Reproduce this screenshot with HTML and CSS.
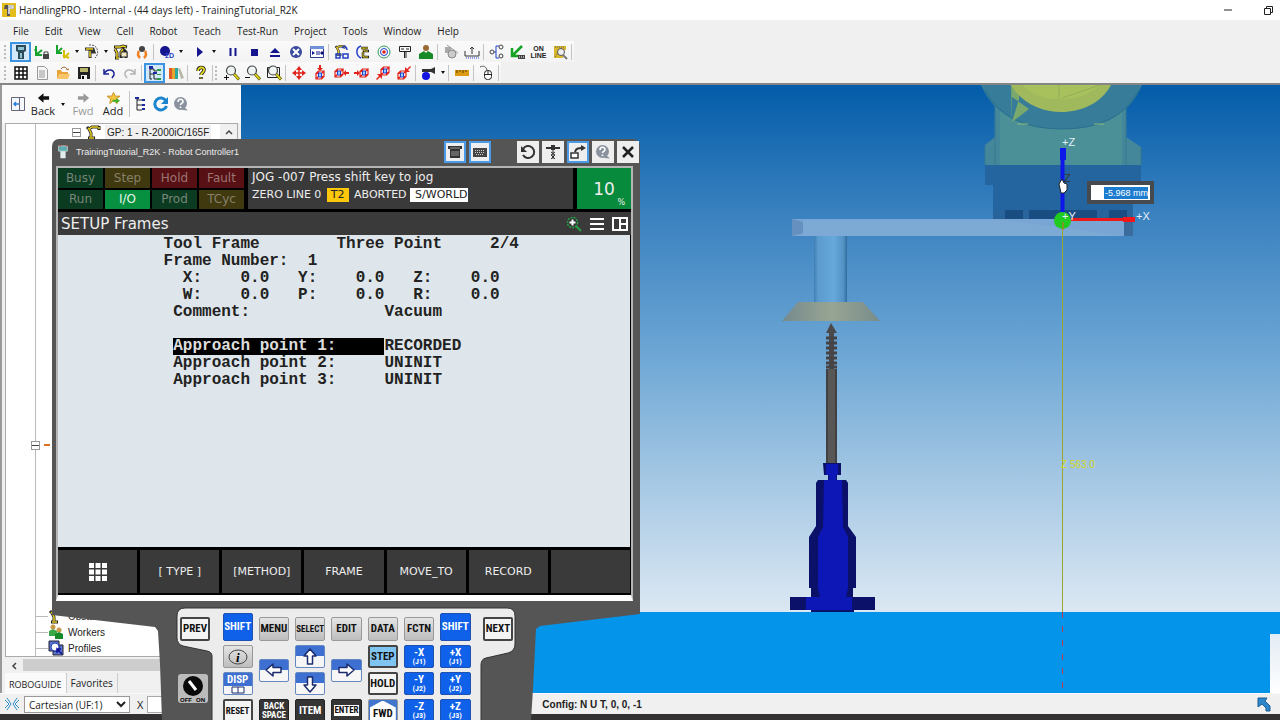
FILE: index.html
```html
<!DOCTYPE html>
<html lang="en">
<head>
  <meta charset="UTF-8">
  <meta name="viewport" content="width=device-width, initial-scale=1.0">
  <title>HandlingPRO</title>
  <link rel="stylesheet" href="styles.css">
</head>
<body>
  <!-- Shared icon parts -->
  <svg class="defs" aria-hidden="true">
    <symbol id="cube" viewBox="0 0 10 10">
      <path d="M1 3.500h5.500v5.500H1zM1 3.500L3.500 1H9L6.500 3.500M9 1v5.500L6.500 9M3.500 1v5.500H9M3.500 6.500L1 9" fill="none" stroke="#e2231a" stroke-width="1.200"/>
      <path d="M3.500 3h3v4h-3z" fill="#9ad0ff" stroke="#2340c8"/>
    </symbol>
    <symbol id="lens" viewBox="0 0 16 16">
      <path d="M10 9l5 5.500" stroke="#6b6400" stroke-width="3"/>
      <path d="M10 9l4.500 5" stroke="#e8dc20" stroke-width="1.500"/>
      <circle cx="7" cy="5.500" r="4.500" fill="#eef4f4" stroke="#444" stroke-width="1.200"/>
    </symbol>
    <symbol id="arrow" viewBox="0 0 20 18">
      <path d="M2 9l7-6v3.500h8v5H9V15z" fill="#fff" stroke="#1c2c6e" stroke-width="1.500" stroke-linejoin="round"/>
    </symbol>
    <symbol id="help" viewBox="0 0 16 16">
      <circle cx="7.500" cy="7.500" r="6.500" fill="#8a92a0"/>
      <path d="M11 11l4 3.500-6-.5z" fill="#8a92a0"/>
      <path d="M5 6c0-3.500 5-3.500 5-.5 0 2-2.500 1.800-2.500 3.500M7.500 10.500v1.500" fill="none" stroke="#fff" stroke-width="1.600"/>
    </symbol>
    <symbol id="arm" viewBox="0 0 16 16">
      <path d="M3 14h7M6 14V9L4 5l3-2h7M14 2v4M2 3l3 3" fill="none" stroke="#222" stroke-width="3"/>
      <path d="M4 14h5M6 13V9L4 5l3-2h6M14 3v2M3 4l2 2" fill="none" stroke="#e8cf20" stroke-width="1.500"/>
    </symbol>
  </svg>

  <div class="app">
    <header class="titlebar">
      <svg class="icon" viewBox="0 0 16 16"><path d="M1 1h14v14H1z" fill="#e3bd1b"/><path d="M4 3h9v4H9v7H6V7H3z" fill="#555"/><path d="M7 4h5v2H8v6" fill="none" stroke="#eee" stroke-width="1.500"/></svg>
      <span>HandlingPRO - Internal - (44 days left) - TrainingTutorial_R2K</span>
      <div class="caption-buttons">
        <button aria-label="Minimize"><svg class="icon" viewBox="0 0 16 16"><path d="M4 8h8" stroke="#222"/></svg></button>
        <button aria-label="Restore"><svg class="icon" viewBox="0 0 16 16"><path d="M4.500 6.500h6v6h-6zM6.500 6V4.500h6v6H11" fill="none" stroke="#222"/></svg></button>
      </div>
    </header>

    <nav class="menubar">
      <a href="#">File</a><a href="#">Edit</a><a href="#">View</a><a href="#">Cell</a><a href="#">Robot</a><a href="#">Teach</a><a href="#">Test-Run</a><a href="#">Project</a><a href="#">Tools</a><a href="#">Window</a><a href="#">Help</a>
    </nav>

    <!-- Toolbars -->
    <div class="toolbars">
      <div class="toolbar">
        <i class="grip"></i>
        <button class="tool active" aria-label="Teach pendant"><svg viewBox="0 0 16 16"><path d="M3 1h10v6l-2 1v7H5V8L3 7z" fill="#2c4a5a"/><path d="M5 3h6v3H5zM7 9h2v5H7z" fill="#8fc4d4"/></svg></button>
        <button class="tool" aria-label="Lock frame"><svg viewBox="0 0 16 16"><path d="M2 2v9h6M2 11l6-5M3 10L1 5" fill="none" stroke="#17a32e" stroke-width="2"/><path d="M9 10h6v5H9z" fill="#444"/><path d="M10 10V8h4v2" fill="none" stroke="#444"/></svg></button>
        <button class="tool" aria-label="Jog frames"><svg viewBox="0 0 16 16"><path d="M2 1v8h5M2 9l5-5" fill="none" stroke="#17a32e" stroke-width="2"/><path d="M9 6v8M9 14l5-5M8 11l6 3" fill="none" stroke="#d8be00" stroke-width="2"/></svg></button>
        <button class="drop" aria-label="More frames"></button>
        <button class="tool" aria-label="Move"><svg viewBox="0 0 16 16"><path d="M1 5h8l1 3H6v6" fill="none" stroke="#333" stroke-width="3"/><path d="M2 5h7M6 7v6" stroke="#e8cf20" stroke-width="1.500"/><path d="M5 1c9-1 11 8 6 13" fill="none" stroke="#555" stroke-dasharray="2 1"/></svg></button>
        <button class="drop" aria-label="More moves"></button>
        <button class="tool" aria-label="Robots"><svg viewBox="0 0 16 16"><path d="M1 3h6l3-1 4 1M2 14h4M4 13V9L2 5M8 14V8l2-3 3 3v6" fill="none" stroke="#222" stroke-width="3"/><path d="M2 3h5l3-1 3 1M3 14h3M4 13V9L2 5M10 5l-2 3v3" fill="none" stroke="#e8cf20" stroke-width="1.500"/><path d="M8 8h6v5H8z" fill="#efe7c0" stroke="#333"/></svg></button>
        <button class="tool" aria-label="Gripper"><svg viewBox="0 0 16 16"><circle cx="8" cy="5" r="3" fill="#444"/><path d="M5 7c-2 3-1 5 1 7M11 7c2 3 1 5-1 7" fill="none" stroke="#ef8122" stroke-width="2.500"/></svg></button>
        <i class="sep"></i>
        <button class="tool" aria-label="2D view"><svg viewBox="0 0 16 16"><circle cx="6" cy="7" r="5" fill="#15158f"/><text x="6" y="14" class="tiny">2D</text></svg></button>
        <button class="drop" aria-label="View options"></button>
        <i class="space"></i>
        <button class="tool" aria-label="Run"><svg viewBox="0 0 16 16"><path d="M5 3l6 5-6 5z" fill="#15158f"/></svg></button>
        <button class="drop" aria-label="Run options"></button>
        <i class="space"></i>
        <button class="tool" aria-label="Pause"><svg viewBox="0 0 16 16"><path d="M5.500 4v8M10.500 4v8" stroke="#15158f" stroke-width="2"/></svg></button>
        <button class="tool" aria-label="Stop"><svg viewBox="0 0 16 16"><path d="M5 5h7v7H5z" fill="#15158f"/></svg></button>
        <button class="tool" aria-label="Eject"><svg viewBox="0 0 16 16"><path d="M3 9l5-5 5 5zM3 11h10v2H3z" fill="#15158f"/></svg></button>
        <button class="tool" aria-label="Abort"><svg viewBox="0 0 16 16"><circle cx="8" cy="8" r="6" fill="#3a4a9c"/><path d="M5 5l6 6M11 5l-6 6" stroke="#fff" stroke-width="2"/></svg></button>
        <button class="tool" aria-label="Run panel"><svg viewBox="0 0 16 16"><path d="M1.500 2.500h13v11h-13z" fill="#fff" stroke="#2b3a90"/><path d="M1 2h14v3H1z" fill="#6f8fd8"/><path d="M3 7l3 2-3 2z" fill="#15158f"/><path d="M8 7v4M10 7v4M12 8h2v2h-2z" stroke="#15158f"/></svg></button>
        <i class="sep"></i>
        <button class="tool" aria-label="Cell layout"><svg viewBox="0 0 16 16"><use href="#arm" width="12" height="12"/><path d="M8 4c2-3 5-1 5 2M2 10h4v4H2zM9 10h5v4H9z" fill="none" stroke="#2340c8" stroke-width="1.500"/></svg></button>
        <button class="tool" aria-label="Robot path"><svg viewBox="0 0 16 16"><path d="M6 2C0 4 1 12 6 14" fill="none" stroke="#2340c8" stroke-width="1.500"/><path d="M6 4h7M9 4v3h5M8 8v5h6" fill="none" stroke="#222" stroke-width="2.500"/><path d="M6 4h7M9 4v3h4M8 8v5h5" fill="none" stroke="#e8cf20"/></svg></button>
        <button class="tool" aria-label="Target"><svg viewBox="0 0 16 16"><circle cx="8" cy="8" r="6" fill="none" stroke="#2d9b58"/><circle cx="8" cy="8" r="3.500" fill="#fff" stroke="#2340c8"/><circle cx="8" cy="8" r="1.800" fill="#e2231a"/></svg></button>
        <button class="tool" aria-label="Sign"><svg viewBox="0 0 16 16"><path d="M2.500 2.500h11v5h-11zM7.500 8v6M9 8v6M4 5h3M9 5h3" fill="none" stroke="#222"/></svg></button>
        <button class="tool" aria-label="Operator"><svg viewBox="0 0 16 16"><circle cx="8" cy="4" r="3" fill="#9a6a32"/><path d="M1 15V10l5-3 2 2 2-2 5 3v5z" fill="#168a26"/></svg></button>
        <i class="sep"></i>
        <button class="tool" aria-label="Shapes"><svg viewBox="0 0 16 16"><path d="M2 3h6v6H2z" fill="#aaa"/><circle cx="9" cy="10" r="4" fill="#ccc" stroke="#888"/><path d="M4 1l11 8" stroke="#999"/></svg></button>
        <button class="tool" aria-label="Measure height"><svg viewBox="0 0 16 16"><path d="M1 7v5h14V7M8 10V3M6 5l2-2 2 2" fill="none" stroke="#333"/><path d="M2 14h13" stroke="#2340c8" stroke-dasharray="1 1"/></svg></button>
        <i class="sep"></i>
        <button class="tool" aria-label="Node tree"><svg viewBox="0 0 16 16"><path d="M10 2H7v12h3M7 8H5" fill="none" stroke="#2340c8"/><circle cx="3" cy="8" r="2" fill="none" stroke="#444"/><circle cx="12" cy="3" r="2" fill="none" stroke="#444"/><circle cx="12" cy="12" r="2" fill="none" stroke="#444"/></svg></button>
        <button class="tool" aria-label="Import"><svg viewBox="0 0 16 16"><path d="M12 2L3 11M2 4v8h7" fill="none" stroke="#14a322" stroke-width="2.500"/><path d="M8 11h7v4H8z" fill="#444"/><path d="M9 13h5" stroke="#fff" stroke-dasharray="1 1"/></svg></button>
        <button class="tool online" aria-label="On line">ON<br>LINE</button>
        <button class="tool" aria-label="Find robot"><svg viewBox="0 0 16 16"><path d="M2 2h12v4h-3v8H2z" fill="#d9b82b"/><path d="M3 13l4-7M3 3h10" stroke="#555" stroke-dasharray="1 1"/><circle cx="9" cy="8" r="3.500" fill="#eee" stroke="#555"/><path d="M11 11l4 4" stroke="#777" stroke-width="2"/></svg></button>
        <i class="sep"></i>
      </div>
      <div class="toolbar">
        <i class="grip"></i>
        <button class="tool" aria-label="Grid"><svg viewBox="0 0 16 16"><path d="M2 2h12v12H2zM2 6h12M2 10h12M6 2v12M10 2v12" fill="#fff" stroke="#111" stroke-width="1.500"/></svg></button>
        <button class="tool" aria-label="New"><svg viewBox="0 0 16 16"><path d="M3.500 1.500h7l3 3v10h-10zM5 6h6M5 8h6M5 10h6M5 12h6" fill="#f5f5f5" stroke="#999"/></svg></button>
        <button class="tool" aria-label="Open"><svg viewBox="0 0 16 16"><path d="M2 13V5h4l1 2h6v6z" fill="#e9a43a"/><path d="M4 9h11l-2 5H2z" fill="#f8c66a"/><path d="M6 4c2-3 6-2 6 1l2-1" fill="none" stroke="#9a6020"/></svg></button>
        <button class="tool" aria-label="Save"><svg viewBox="0 0 16 16"><path d="M2 2h12v12H2z" fill="#222"/><path d="M4 3h8v4H4z" fill="#b7b56a"/><path d="M5 10h6v4H5z" fill="#eee"/><path d="M6 11h2v3H6z"/></svg></button>
        <i class="sep"></i>
        <button class="tool" aria-label="Undo"><svg viewBox="0 0 16 16"><path d="M3 4v5h5M3 9c3-6 11-5 10 1l-2 3" fill="none" stroke="#1c2494" stroke-width="1.500"/></svg></button>
        <button class="tool" aria-label="Redo"><svg viewBox="0 0 16 16"><path d="M13 4v5H8M13 9C10 3 2 4 3 10l2 3" fill="none" stroke="#b5b5b5" stroke-width="1.500"/></svg></button>
        <i class="sep"></i>
        <button class="tool active" aria-label="Cell browser"><svg viewBox="0 0 16 16"><path d="M3 2v12M3 4h4M3 9h4M7 9v5h3M3 14h2M7 4v2h3" fill="none" stroke="#222"/><path d="M2 1h4v3H2zM6 7h4v2H6z" fill="#1d2aa5"/><path d="M10 4h4v2h-4zM10 9h4v1h-4zM10 13h4v2h-4z" fill="#2a9a47"/></svg></button>
        <button class="tool" aria-label="Library"><svg viewBox="0 0 16 16"><path d="M1 3h3v11H1z" fill="#e05a2a"/><path d="M4 3h3v11H4z" fill="#e8a22e"/><path d="M7 3h3v11H7z" fill="#2ea8a0"/><path d="M10 4l2-1 4 10-3 1z" fill="#b8b8a8"/></svg></button>
        <i class="sep"></i>
        <button class="tool" aria-label="Help"><svg viewBox="0 0 16 16"><path d="M5 6c0-5 7-4 6-1 0 3-3 3-3 5M8 12v2" fill="none" stroke="#222" stroke-width="3.500"/><path d="M5 6c0-5 7-4 6-1 0 3-3 3-3 5M8 12.500v1" fill="none" stroke="#e8dc20" stroke-width="1.800"/></svg></button>
        <i class="sep"></i><i class="grip"></i>
        <button class="tool" aria-label="Zoom in"><svg viewBox="0 0 16 16"><use href="#lens"/><path d="M0 12.500h5M2.500 10v5" stroke="#111"/></svg></button>
        <button class="tool" aria-label="Zoom out"><svg viewBox="0 0 16 16"><use href="#lens"/><path d="M0 12.500h5" stroke="#111"/></svg></button>
        <button class="tool" aria-label="Zoom window"><svg viewBox="0 0 16 16"><path d="M1.500 2.500h12v10h-12z" fill="none" stroke="#222"/><use href="#lens"/></svg></button>
        <i class="sep"></i>
        <button class="tool" aria-label="Centre"><svg viewBox="0 0 16 16"><path d="M8 1l3 4H5zM8 15l3-4H5zM1 8l4-3v6zM15 8l-4-3v6z" fill="#e2231a"/><path d="M8 5v6M5 8h6" stroke="#e2231a" stroke-width="1.500"/></svg></button>
        <button class="tool" aria-label="Top view"><svg viewBox="0 0 16 16"><use href="#cube" x="3" y="5" width="10" height="10"/><path d="M8 6L5 3h2V0h2v3h2z" fill="#e2231a"/></svg></button>
        <button class="tool" aria-label="Right view"><svg viewBox="0 0 16 16"><use href="#cube" x="1" y="3" width="10" height="10"/><path d="M10 8l3-3v2h3v2h-3v2z" fill="#e2231a"/></svg></button>
        <button class="tool" aria-label="Left view"><svg viewBox="0 0 16 16"><use href="#cube" x="5" y="3" width="10" height="10"/><path d="M6 8L3 5v2H0v2h3v2z" fill="#e2231a"/></svg></button>
        <button class="tool" aria-label="Front view"><svg viewBox="0 0 16 16"><use href="#cube" x="5" y="1" width="10" height="10"/><path d="M7 9H2l2 2-3 3 1 1 3-3 2 2z" fill="#e2231a"/></svg></button>
        <button class="tool" aria-label="Back view"><svg viewBox="0 0 16 16"><use href="#cube" x="1" y="5" width="10" height="10"/><path d="M9 7V2l2 2 3-3 1 1-3 3 2 2z" fill="#e2231a"/></svg></button>
        <i class="sep"></i>
        <button class="tool" aria-label="Camera"><svg viewBox="0 0 16 16"><path d="M1 4h9l4-2v7l-4-2H1z" fill="#333"/><circle cx="5" cy="11" r="4" fill="#1414e0"/></svg></button>
        <button class="drop" aria-label="Camera options"></button>
        <i class="sep"></i>
        <button class="tool" aria-label="Measure"><svg viewBox="0 0 16 16"><path d="M1 5h14v6H1z" fill="#dc9a12"/><path d="M3 5v3M6 5v2M9 5v3M12 5v2" stroke="#5b3c00"/></svg></button>
        <i class="sep"></i>
        <button class="tool" aria-label="Mouse"><svg viewBox="0 0 16 16"><path d="M1 2c4-2 6 0 7 3" fill="none" stroke="#555"/><rect x="5.500" y="5.500" width="7" height="9" rx="3" fill="#fff" stroke="#222"/><path d="M5 9.500h8M9 5v4" stroke="#222"/></svg></button>
        <i class="sep"></i>
      </div>
    </div>

    <main class="workspace">
      <!-- Cell browser -->
      <aside class="browser">
        <div class="browser-tools">
          <button aria-label="Dock"><svg class="icon" viewBox="0 0 16 16"><path d="M1.500 1.500h13v13h-13zM9.500 2v12" fill="#f5f8fc" stroke="#667"/><path d="M9 8H4M6 6L4 8l2 2" fill="none" stroke="#2a80d8" stroke-width="1.500"/></svg></button>
          <button class="nav"><svg viewBox="0 0 14 12"><path d="M1 6l6-5v3h6v4H7v3z" fill="#111"/></svg>Back</button>
          <button class="drop" aria-label="Back history"></button>
          <button class="nav" disabled><svg viewBox="0 0 14 12"><path d="M13 6L7 1v3H1v4h6v3z" fill="#999"/></svg>Fwd</button>
          <button class="nav"><svg viewBox="0 0 14 12"><path d="M7 0l2 4h5l-4 3 1 5-4-3-4 3 1-5-4-3h5z" fill="#f5c542" stroke="#c98c1e"/><path d="M6 8h4V6l4 3-4 3v-2H6z" fill="#43b02a"/></svg>Add</button>
          <i class="sep"></i>
          <button aria-label="Tree"><svg class="icon" viewBox="0 0 16 16"><path d="M4 2v12M4 4h5M4 9h5M4 14h5" fill="none" stroke="#222"/><path d="M2 1h4v2H2zM9 3h3v2H9zM9 8h3v2H9zM9 12h3v2H9z" fill="#1d2aa5"/></svg></button>
          <button aria-label="Refresh"><svg class="icon" viewBox="0 0 16 16"><path d="M13 5A6 6 0 1 0 13.500 10" fill="none" stroke="#1b84cf" stroke-width="3"/><path d="M15 1v7H8z" fill="#1b84cf"/></svg></button>
          <button aria-label="Browser help"><svg class="icon"><use href="#help"/></svg></button>
        </div>
        <div class="tree">
          <div class="tree-row root">
            <span class="twisty"></span>
            <svg class="icon"><use href="#arm"/></svg>
            <span class="selected">GP: 1 - R-2000iC/165F</span>
            <button class="scroll-up" aria-label="Scroll up"><svg viewBox="0 0 8 8"><path d="M1 6l3-3 3 3" fill="none" stroke="#444" stroke-width="1.500"/></svg></button>
          </div>
          <div class="tree-row branch"><span class="twisty"></span><svg class="icon" viewBox="0 0 16 16"><path d="M0 8h6" stroke="#e07020" stroke-width="2"/></svg></div>
          <div class="tree-tail">
            <div class="tree-row leaf"><svg class="icon"><use href="#arm"/></svg>Obstacles</div>
            <div class="tree-row leaf"><svg class="icon" viewBox="0 0 16 16"><circle cx="5" cy="3" r="2.500" fill="#c79a4a"/><path d="M1 12V7l4-2 4 2v5z" fill="#3aa845"/><circle cx="11" cy="6" r="2.500" fill="#c79a4a"/><path d="M7 15v-5l4-2 4 2v5z" fill="#168a26"/></svg>Workers</div>
            <div class="tree-row leaf"><svg class="icon" viewBox="0 0 16 16"><path d="M1 1h10v10H1zM5 5h10v10H5z" fill="#5a73c9" stroke="#223"/><circle cx="7" cy="7" r="4" fill="#fff" stroke="#2340c8"/><path d="M14 14L9 9v4M9 9h4" stroke="#1010a0" stroke-width="1.500" fill="none"/></svg>Profiles</div>
          </div>
        </div>
        <div class="hscroll"><button aria-label="Scroll left"><svg viewBox="0 0 8 8"><path d="M6 1L3 4l3 3" fill="none" stroke="#444" stroke-width="1.500"/></svg></button><i></i></div>
        <div class="tabs"><button class="current">ROBOGUIDE</button><button>Favorites</button></div>
      </aside>

      <!-- 3D view -->
      <section class="viewport">
        <svg class="scene" viewBox="241 85 1039 608" preserveAspectRatio="xMinYMin slice">
          <defs>
            <linearGradient id="sky" x1="0" y1="0" x2="0" y2="1">
              <stop offset="0" stop-color="#035ca9"/><stop offset=".25" stop-color="#3b82c0"/><stop offset=".5" stop-color="#6ba5d4"/><stop offset=".75" stop-color="#a5c8e4"/><stop offset="1" stop-color="#dce8f3"/>
            </linearGradient>
            <linearGradient id="pipe"><stop offset="0" stop-color="#3f7fb4"/><stop offset=".12" stop-color="#5c9bce"/><stop offset=".6" stop-color="#67a9dc"/><stop offset=".9" stop-color="#5291c4"/><stop offset="1" stop-color="#2f6b9c"/></linearGradient>
            <linearGradient id="cup"><stop offset="0" stop-color="#748a8c"/><stop offset=".5" stop-color="#98a594"/><stop offset="1" stop-color="#788c8a"/></linearGradient>
            <linearGradient id="white" x1="0" y1="0" x2="0" y2="1"><stop offset="0" stop-color="#e2ebf4"/><stop offset="1" stop-color="#fff"/></linearGradient>
          </defs>
          <path d="M241 85h1039v528H241z" fill="url(#sky)"/>
          <path d="M241 612h1039v81H241z" fill="#0494ea"/>
          <path d="M1270 634h10v59h-10z" fill="url(#white)"/>
          <!-- wrist -->
          <path d="M981 85h161l-16 22v30l15 10v18H985v-20l10-8v-30z" fill="#44869a"/>
          <path d="M1000 100h122v65h-122z" fill="#4b8f97"/>
          <path d="M981 85Q1000 129 1062 129T1142 85z" fill="#377d9a"/>
          <path d="M985 90Q1005 129 1062 129T1139 90" fill="none" stroke="#28708e"/>
          <path d="M995 107v58M1126 107v58M985 147v18M1141 147v18" stroke="#367b8f"/>
          <path d="M1011 85h8v14l-7 23zM1012 122l17-13-17-12z" fill="#7ba96c"/>
          <path d="M1011 85c20 36 81 36 100 0z" fill="#a0b95d"/>
          <path d="M1022 85c20 20 60 18 78 0z" fill="#a9c15c"/>
          <path d="M1059 85v14M1062 98l38-13" stroke="#8fae5a"/>
          <path d="M1017 124h11M1094 124h10" stroke="#8fb77a"/>
          <path d="M985 165h156v20h-8v34H993v-34h-8z" fill="#2465a0"/>
          <path d="M993 210h140v9H993z" fill="#29639b"/>
          <path d="M1005 210h18v9h-18zM1029 210h68v9h-68zM1109 210h18v9h-18z" fill="#194c80"/>
          <!-- tool plate and vacuum cup -->
          <path d="M1124 219h9v17h-9z" fill="#3a6d9d"/>
          <path d="M792 219h332v17H792z" fill="#78a5d3"/>
          <path d="M792 219l11 3v11l-11 3z" fill="#6690bf"/>
          <path d="M803 220h200l120 16H803z" fill="#7da9d5"/>
          <path d="M814 236h33v66h-33z" fill="url(#pipe)"/>
          <path d="M798 302h65l17 19h-98z" fill="url(#cup)"/>
          <!-- needle -->
          <path d="M831 323l6 10h-3v36h-5v-36h-3z" fill="#4b494a"/>
          <path d="M826 338h11M826 343h11M826 348h11M826 353h11M826 358h11M826 363h11M826 367h11" stroke="#454344" stroke-width="3"/>
          <path d="M826 369h11v94h-11z" fill="#595756"/>
          <path d="M827 369v94M836 369v94" stroke="#414144" stroke-width="2"/>
          <!-- pointer body -->
          <path d="M823 463h18v12h-4v5h9l2 3v43l8 11v51h-3v9h22v13h-21v2h-43v-2h-21v-13h21v-9h-2v-51l7-11v-43l2-3h10v-5h-4z" fill="#0b1068"/>
          <path d="M826 464h12v11h-2v5h6l1 47 5 10v51l-2 9h6v13h-46v-13h14l-2-9v-51l5-10 1-47h5v-5h-3z" fill="#0d17b5"/>
          <!-- jog handle -->
          <path d="M1062.500 222v390" stroke="#9aa62f"/>
          <path d="M1062.500 612v78" stroke="#b53a58" stroke-dasharray="6 8"/>
          <path d="M1062.500 148v68" stroke="#0d18e8" stroke-width="4"/>
          <path d="M1060 148h6v12h-6z" fill="#0d18e8"/>
          <circle cx="1062.500" cy="220.500" r="8.500" fill="#20cc20"/>
          <path d="M1071 219.500h61" stroke="#f01818" stroke-width="3"/>
          <path d="M1123 217h12v5h-12z" fill="#f01818"/>
          <path d="M1063 222v8" stroke="#d86030"/>
          <g class="axis"><text x="1062" y="146">+Z</text><text x="1136" y="220">+X</text><text x="1062" y="220">+Y</text><text x="1064" y="182" class="shade">Z</text></g>
          <path d="M1059 184l3-5 2 4 3 1v6l-3 3h-3z" fill="#fff" stroke="#222"/>
          <text x="1061" y="468" class="distance">Z 563.0</text>
        </svg>
        <input class="offset" aria-label="Z offset" value="-5.968 mm">
      </section>
    </main>

    <footer class="statusbar">
      <svg class="icon" viewBox="0 0 16 16"><path d="M1 4l4 4-4 4M15 4l-4 4 4 4M3 2l4 6-4 6M13 2L9 8l4 6" fill="none" stroke="#2a8fc8"/></svg>
      <select aria-label="Coordinate system"><option>Cartesian (UF:1)</option></select>
      <label for="posX">X</label><input id="posX" type="text">
      <output>Config: N U T, 0, 0, -1</output>
      <svg class="icon pointer" viewBox="0 0 16 16"><path d="M2 2h9L9 5l5 5v5h-4v-3L6 8l-4 3z" fill="#2f86c9" stroke="#1d5f98"/></svg>
    </footer>
    <div class="desk"></div>

    <!-- Teach pendant window -->
    <section class="pendant">
      <header class="pendant-title">
        <svg class="icon" viewBox="0 0 16 16"><path d="M3 1h10v6H3z" fill="#58aeb0" stroke="#ccc"/><path d="M5 7h6v8H5z" fill="#e0edf0"/><path d="M4 1h2M11 1h2" stroke="#e2231a"/></svg>
        <h1>TrainingTutorial_R2K - Robot Controller1</h1>
        <div class="pendant-buttons">
          <button class="on" aria-label="Display"><svg viewBox="0 0 16 16"><path d="M1 2h14v3h-2v9H3V5H1z" fill="#333"/><path d="M5 7v5M7 7v5M9 7v5M11 7v5M3 4h10" stroke="#999"/></svg></button>
          <button class="on" aria-label="Keyboard"><svg viewBox="0 0 16 16"><path d="M1 4h14v9H1z" fill="#444"/><path d="M3 6.500h10M3 8.500h10M4 10.500h8" stroke="#ccc" stroke-dasharray="1 1"/></svg></button>
          <i></i>
          <button aria-label="Reset"><svg viewBox="0 0 16 16"><path d="M3 5a6 6 0 1 1 0 6" fill="none" stroke="#333" stroke-width="2"/><path d="M1 2v6h6z" fill="#333"/></svg></button>
          <button aria-label="Robot"><svg viewBox="0 0 16 16"><path d="M1 3h14v2H1zM6 1h4v5H6z" fill="#333"/><path d="M8 6v9M6 8l4 3M10 8l-4 3M6 11l4 4M10 11l-4 4" fill="none" stroke="#333"/></svg></button>
          <button class="on" aria-label="Attach"><svg viewBox="0 0 16 16"><path d="M1 9h7v5H1z" fill="#fff" stroke="#333" stroke-width="1.500"/><path d="M5 8c1-4 4-4 7-4" fill="none" stroke="#333" stroke-width="2"/><path d="M11 1l5 3-5 3z" fill="#333"/></svg></button>
          <button aria-label="Pendant help"><svg><use href="#help"/></svg></button>
          <button aria-label="Close"><svg viewBox="0 0 16 16"><path d="M3 3l10 10M13 3L3 13" stroke="#222" stroke-width="2.500"/></svg></button>
        </div>
      </header>

      <div class="screen">
        <div class="status">
          <div class="leds">
            <span class="green">Busy</span><span class="yellow">Step</span><span class="red">Hold</span><span class="red">Fault</span>
            <span class="green">Run</span><span class="green lit">I/O</span><span class="green">Prod</span><span class="yellow">TCyc</span>
          </div>
          <div class="messages">
            <p>JOG -007 Press shift key to jog</p>
            <p>ZERO LINE 0 <mark class="mode">T2</mark> ABORTED <mark>S/WORLD</mark></p>
          </div>
          <div class="speed">10<small>%</small></div>
        </div>
        <div class="screen-title">
          <h2>SETUP Frames</h2>
          <button aria-label="Zoom"><svg class="icon" viewBox="0 0 16 16"><circle cx="6.500" cy="6.500" r="5" fill="#333" stroke="#24a148" stroke-width="1.500" stroke-dasharray="2 1"/><path d="M10 10l5 5" stroke="#24a148" stroke-width="2"/><path d="M3.500 6.500h6M6.500 3.500v6" stroke="#fff" stroke-width="2"/></svg></button>
          <button aria-label="Menu"><svg class="icon" viewBox="0 0 16 16"><path d="M1 3h14M1 8h14M1 13h14" stroke="#fff" stroke-width="2"/></svg></button>
          <button aria-label="Layout"><svg class="icon" viewBox="0 0 16 16"><path d="M1 2h14v12H1zM8 2v12M8 8h7" fill="none" stroke="#fff" stroke-width="2"/></svg></button>
        </div>
        <div class="terminal">
          <div>           Tool Frame        Three Point     2/4</div>
          <div>           Frame Number:  1</div>
          <div>             X:    0.0   Y:    0.0   Z:    0.0</div>
          <div>             W:    0.0   P:    0.0   R:    0.0</div>
          <div>            Comment:              Vacuum</div>
          <div> </div>
          <div class="picked"><span class="cursor">Approach point 1:     </span><span>RECORDED</span></div>
          <div>            Approach point 2:     UNINIT</div>
          <div>            Approach point 3:     UNINIT</div>
        </div>
        <div class="softkeys">
          <button aria-label="Key menu"><svg class="icon" viewBox="0 0 18 18"><path d="M0 0h5v5H0zM6.500 0h5v5h-5zM13 0h5v5h-5zM0 6.500h5v5H0zM6.500 6.500h5v5h-5zM13 6.500h5v5h-5zM0 13h5v5H0zM6.500 13h5v5h-5zM13 13h5v5h-5z" fill="#fff"/></svg></button>
          <button>[ TYPE ]</button><button>[METHOD]</button><button>FRAME</button><button>MOVE_TO</button><button>RECORD</button><button aria-label="Unassigned"></button>
        </div>
      </div>

      <div class="keypad">
        <svg class="keypad-shape" viewBox="0 0 340 114"><path d="M9 1h322q8 0 8 8v28q0 7-7 9l-22 5q-5 1-5 7v60H36V49q0-4-5-5L7 39q-6-2-6-8V9q0-8 8-8z" fill="#ececec" stroke="#333"/></svg>
        <div class="side">
          <button class="key framed">PREV</button>
          <button class="knob" aria-label="Enable switch"><svg viewBox="0 0 30 29"><circle cx="15" cy="12" r="10" fill="#0a0a0a"/><path d="M11 7l7 9" stroke="#fff" stroke-width="3"/><text x="2" y="28">OFF</text><text x="18" y="28">ON</text></svg></button>
        </div>
        <div class="keys">
          <button class="key blue shift">SHIFT</button><button class="key">MENU</button><button class="key small">SELECT</button><button class="key">EDIT</button><button class="key">DATA</button><button class="key">FCTN</button><button class="key blue shift">SHIFT</button>
          <button class="key" aria-label="Info"><svg viewBox="0 0 20 18"><ellipse cx="10" cy="9" rx="9" ry="7" fill="none" stroke="#444"/><text x="8" y="14" class="info">i</text></svg></button>
          <button class="key split tall left-key" aria-label="Left"><svg><use href="#arrow"/></svg></button>
          <button class="key split" aria-label="Up"><svg class="up"><use href="#arrow"/></svg></button>
          <button class="key split tall right-key" aria-label="Right"><svg class="right"><use href="#arrow"/></svg></button>
          <button class="key framed step">STEP</button><button class="key blue">-X<small>(J1)</small></button><button class="key blue">+X<small>(J1)</small></button>
          <button class="key split disp">DISP<svg viewBox="0 0 14 8"><path d="M1 1h12v6H1zM7 1v6" fill="#fff" stroke="#1c2c6e"/></svg></button>
          <button class="key split" aria-label="Down"><svg class="down"><use href="#arrow"/></svg></button>
          <button class="key framed">HOLD</button><button class="key blue">-Y<small>(J2)</small></button><button class="key blue">+Y<small>(J2)</small></button>
          <button class="key framed small">RESET</button><button class="key dark small">BACK<br>SPACE</button><button class="key dark">ITEM</button><button class="key dark small"><span class="enter">ENTER</span></button><button class="key fwd"><span>FWD</span></button><button class="key blue">-Z<small>(J3)</small></button><button class="key blue">+Z<small>(J3)</small></button>
        </div>
        <div class="side"><button class="key framed">NEXT</button></div>
      </div>
    </section>
  </div>
</body>
</html>
```
FILE: styles.css
```css
* { box-sizing: border-box; }
body {
  margin: 0;
  font-family: "Open Sans", "Noto Sans", sans-serif;
  font-size: 11px;
  color: #222;
}
button, input, select { font: inherit; color: inherit; }
button { padding: 0; border: none; background: none; }
h1, h2, p { margin: 0; font-weight: normal; }
a { color: inherit; text-decoration: none; }
.defs { position: absolute; width: 0; height: 0; }
.icon { width: 16px; height: 16px; display: block; flex: none; }

.app {
  position: relative;
  height: 100vh;
  display: flex;
  flex-direction: column;
  overflow: hidden;
  background: #f0f0f0;
}

/* Title and menus */
.titlebar {
  display: flex;
  align-items: center;
  gap: 2px;
  height: 20px;
  padding: 0 4px 0 1px;
  background: #fff;
  font-size: 10px;
}
.caption-buttons { display: flex; gap: 24px; margin-left: auto; }
.menubar {
  display: flex;
  align-items: center;
  gap: 16px;
  height: 21px;
  padding: 0 13px;
  font-size: 10px;
}

/* Toolbars */
.toolbars { border-bottom: 2px solid #858585; }
.toolbar {
  display: flex;
  align-items: center;
  width: fit-content;
  height: 21px;
  padding-left: 4px;
  background: linear-gradient(#fafafa, #f3f3f3);
}
.grip { width: 2px; height: 14px; margin-right: 4px; border-left: 2px dotted #bbb; }
.sep { width: 1px; height: 16px; margin: 0 2px 0 1px; background: #c4c4c4; }
.space { width: 4px; }
.tool {
  display: flex;
  align-items: center;
  justify-content: center;
  width: 21px;
  height: 20px;
}
.tool svg { width: 16px; height: 16px; flex: none; }
.tool.active { border: 2px solid #3c93e0; background: #d3e8fa; }
.tool.online { font: bold 7px/7px "Liberation Sans", sans-serif; }
.tiny { font: bold 7px "Liberation Sans", sans-serif; fill: #2340c8; }
.drop { display: flex; align-items: center; justify-content: center; width: 8px; height: 18px; }
.drop::after {
  content: "";
  border: 2px solid transparent;
  border-top: 3px solid #111;
  border-bottom: 0;
}

/* Workspace */
.workspace { flex: 1; display: flex; min-height: 0; }
.browser {
  display: flex;
  flex-direction: column;
  width: 241px;
  padding-left: 3px;
  border-left: 2px solid #999;
  background: #f0f0f0;
}
.browser-tools {
  display: flex;
  align-items: center;
  gap: 2px;
  height: 38px;
  margin-left: -3px;
  padding-left: 7px;
  background: #fafafa;
}
.browser-tools .icon { margin: 0 1px; }
.browser-tools .sep { height: 26px; margin: 0; }
.nav { display: flex; flex-direction: column; align-items: center; width: 28px; line-height: 13px; }
.nav svg { width: 13px; height: 12px; }
.nav:disabled { color: #999; }
.tree {
  flex: 1;
  display: flex;
  flex-direction: column;
  justify-content: space-between;
  margin-right: 3px;
  border: 1px solid #aaa;
  background: linear-gradient(90deg, transparent 29px, #bbb 29px, #bbb 30px, transparent 30px) #fff;
  font: 10px "Liberation Sans", sans-serif;
}
.tree-row { display: flex; align-items: center; gap: 4px; height: 16px; }
.tree-row.root { padding-left: 66px; }
.tree-row.branch { padding-left: 25px; margin-top: 142px; }
.twisty { width: 9px; height: 9px; border: 1px solid #999; background: linear-gradient(transparent 3px, #444 3px, #444 4px, transparent 4px) #fff; }
.selected { padding: 2px; background: #f0f0f0; }
.scroll-up { width: 17px; height: 16px; margin-left: auto; background: #f0f0f0; }
.scroll-up svg, .hscroll svg { width: 8px; height: 8px; }
.tree-row.leaf { padding-left: 43px; }
.tree-row.leaf::before { content: ""; width: 12px; height: 1px; margin: 0 -4px 0 -13px; background: #bbb; }
.hscroll { display: flex; height: 16px; margin-right: 3px; }
.hscroll button { width: 18px; }
.hscroll i { flex: 1; margin: 2px 0; background: #cdcdcd; }
.tabs { display: flex; height: 20px; font-size: 10px; }
.tabs button { padding: 0 4px; border-right: 1px solid #ccc; }
.tabs .current { background: #fafafa; padding: 2px 4px 0 4px; font-size: 9px; }

.viewport { position: relative; flex: 1; min-width: 0; }
.scene { display: block; width: 100%; height: 100%; }
.axis { font: 11px "Liberation Sans", sans-serif; fill: #e4f0fa; }
.axis .shade { fill: #333; }
.distance { font: 10px "Liberation Sans", sans-serif; fill: #d6d81e; }
.offset {
  position: absolute;
  left: 846px;
  top: 96px;
  width: 67px;
  height: 23px;
  padding: 0 2px 0 6px;
  border: 4px solid #46494e;
  background: linear-gradient(#1b7cd0, #1b7cd0) right 2px center / 44px 12px no-repeat #fff;
  color: #fff;
  font: 9px "Liberation Sans", sans-serif;
  text-align: right;
}

/* Status bar */
.statusbar {
  display: flex;
  align-items: center;
  height: 21px;
  padding: 0 8px 0 4px;
  border-top: 1px solid #fafafa;
}
.statusbar select {
  width: 106px;
  height: 17px;
  margin: 0 7px 0 4px;
  padding: 0;
  border: 1px solid #999;
  background: #fff;
  font: 10px "Open Sans", sans-serif;
}
.statusbar input { width: 60px; height: 17px; margin-left: 4px; border: 1px solid #aaa; }
.statusbar output { margin-left: 335px; font: bold 10px "Liberation Sans", sans-serif; }
.pointer { margin-left: auto; }
.desk { height: 6px; background: #343132; }

/* Teach pendant */
.pendant {
  position: absolute;
  left: 52px;
  top: 139px;
  bottom: 0;
  width: 588px;
  padding: 0 7px 0 4px;
  border-radius: 7px 7px 0 0;
  background: #555;
  color: #eee;
  font-family: "DejaVu Sans", sans-serif;
  clip-path: polygon(0 0, 100% 0, 100% 475px, 488px 487px, 484px 490px, 481px 550px, 479px 100%, 110px 100%, 108px 525px, 106px 492px, 103px 488px, 0 476px);
}
.pendant-title { display: flex; align-items: center; gap: 6px; height: 27px; padding-bottom: 1px; }
.pendant-title h1 { font: 9px "Liberation Sans", sans-serif; }
.pendant-title .icon { width: 14px; }
.pendant-buttons { display: flex; gap: 3px; margin-left: auto; margin-right: -6px; }
.pendant-buttons button {
  display: flex;
  align-items: center;
  justify-content: center;
  width: 22px;
  height: 22px;
  background: #eee;
}
.pendant-buttons .on { border: 2px solid #4b9be8; }
.pendant-buttons svg { width: 16px; height: 16px; flex: none; }
.pendant-buttons i { width: 20px; }
.screen {
  border: 2px solid #b5b5b5;
  border-bottom: 6px solid #fff;
  background: #000;
}
.status { display: flex; gap: 4px; height: 43px; padding-bottom: 2px; }
.leds {
  display: grid;
  grid-template-columns: repeat(4, 45px);
  grid-template-rows: 1fr 1fr;
  gap: 2px;
}
.leds span { display: flex; align-items: center; justify-content: center; font-size: 12px; color: #77857a; }
.leds .green { background: #0b3b20; }
.leds .yellow { background: #40380f; color: #85806a; }
.leds .red { background: #571013; color: #9c7575; }
.leds .lit { background: #079040; color: #e6f5e9; }
.messages { flex: 1; padding: 1px 4px; background: #3a3a3a; font-size: 12px; line-height: 17px; white-space: nowrap; }
.messages p:last-child { font-size: 11px; }
.messages mark { display: inline-block; line-height: 14px; padding: 0 0 0 5px; background: #fff; color: #222; }
.messages .mode { margin: 0 2px; padding: 0 4px; background: #fdc80c; }
.speed { position: relative; width: 54px; background: #088a3c; font-size: 17px; line-height: 42px; text-align: center; }
.speed small { position: absolute; right: 6px; bottom: 2px; font-size: 8px; line-height: 8px; }
.screen-title { display: flex; align-items: center; gap: 7px; height: 24px; padding: 0 3px; background: #3a3a3a; border-top: 1px solid #000; }
.screen-title h2 { flex: 1; font-size: 15px; }
.terminal {
  height: 312px;
  margin: 0 1px 0 0;
  padding-top: 1px;
  background: #dfe6eb;
  color: #222;
  font: bold 16px/17px "Liberation Mono", monospace;
}
.terminal div { height: 17px; white-space: pre; }
.terminal .picked { display: flex; padding-left: 12ch; }
.cursor { background: #000; color: #ddd; }
.softkeys {
  display: grid;
  grid-template-columns: repeat(7, 1fr);
  gap: 3px;
  height: 48px;
  padding: 3px 1px 2px 0;
  font-size: 11px;
}
.softkeys button { display: flex; align-items: center; justify-content: center; background: #3a3a3a; }
.softkeys .icon { width: 18px; height: 18px; }

/* Keypad */
.keypad {
  position: relative;
  display: flex;
  justify-content: space-between;
  width: 340px;
  height: 114px;
  margin: 6px 0 0 120px;
  padding: 6px 3px 0 4px;
}
.keypad-shape { position: absolute; inset: 0; width: 340px; height: 114px; }
.side { position: relative; display: flex; flex-direction: column; justify-content: space-between; width: 30px; height: 90px; padding-top: 4px; }
.keys {
  position: relative;
  display: grid;
  grid-template-columns: repeat(7, 1fr);
  grid-template-rows: 28px 23px 23px 23px;
  grid-auto-flow: row dense;
  gap: 4px 6px;
  width: 248px;
}
.key {
  display: flex;
  flex-direction: column;
  align-items: center;
  justify-content: center;
  min-width: 0;
  min-height: 23px;
  border: 1px solid #999;
  border-radius: 2px;
  background: linear-gradient(#e4e4e4, #bdbdbd);
  color: #111;
  font: bold 11px/10px "Liberation Sans Narrow", "Roboto Condensed", "Liberation Sans", sans-serif;
  white-space: nowrap;
}
.keys > .key:nth-child(-n+7):not(.shift) { margin-top: 4px; }
.key.small { font-size: 9px; }
.key.framed { border: 2px solid #444; background: #f4f4f4; }
.side .key { height: 24px; }
.key.step { background: #80c4f2; }
.key.blue { border-color: #2050b0; background: #0e61e8; color: #fff; }
.key.blue small { font-size: 8px; line-height: 8px; }
.key.split { border-color: #6688c0; background: linear-gradient(#3d70d0 50%, #f6f6f6 50%); }
.key svg { width: 20px; height: 18px; flex: none; }
.key .up { transform: rotate(90deg); }
.key .down { transform: rotate(-90deg); }
.key .right { transform: rotate(180deg); }
.key.tall { grid-row: 2 / span 2; align-self: center; }
.left-key { grid-column: 2; }
.right-key { grid-column: 4; }
.key.disp { background: linear-gradient(#3d70d0 60%, #f6f6f6 60%); color: #fff; line-height: 12px; }
.key.disp svg { width: 14px; height: 8px; }
.key.dark { background: #353535; color: #fff; border-color: #222; line-height: 9px; }
.enter { padding: 1px 0; background: #fff; color: #111; }
.key.fwd { background: #4276ce; }
.key.fwd span { width: 26px; padding: 8px 0 2px; background: #fff; clip-path: polygon(50% 0, 100% 35%, 100% 100%, 0 100%, 0 35%); text-align: center; }
.knob { width: 30px; height: 29px; margin-left: -2px; border-radius: 3px; background: #bbb; }
.knob svg { display: block; width: 30px; height: 29px; }
.knob text { font: bold 6px "Liberation Sans", sans-serif; }
.info { font: italic bold 13px "Liberation Serif", serif; }
```
